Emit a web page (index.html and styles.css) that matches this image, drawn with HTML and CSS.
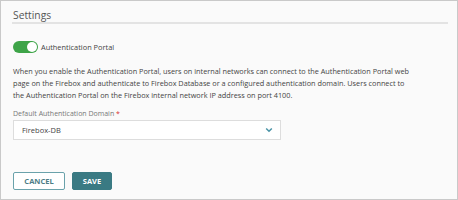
FILE: index.html
```html
<!DOCTYPE html>
<html>
<head>
<meta charset="utf-8">
<link rel="stylesheet" href="styles.css">
</head>
<body>
<div class="panel">
  <h2 class="title">Settings</h2>
  <div class="toggle-row">
    <span class="toggle"><span class="knob"></span></span>
    <span class="toggle-label">Authentication Portal</span>
  </div>
  <p class="desc">When you enable the Authentication Portal, users on internal networks can connect to the Authentication Portal web page on the Firebox and authenticate to Firebox Database or a configured authentication domain. Users connect to the Authentication Portal on the Firebox internal network IP address on port 4100.</p>
  <div class="field">
    <label class="field-label">Default Authentication Domain <span class="req">*</span></label>
    <div class="select">
      <span class="select-value">Firebox-DB</span>
      <svg class="chev" width="8" height="6" viewBox="0 0 8 6"><path d="M1.2 1.5 L4 4.3 L6.8 1.5" fill="none" stroke="#4a93a6" stroke-width="1.5"/></svg>
    </div>
  </div>
  <div class="actions">
    <button class="btn btn-cancel">CANCEL</button>
    <button class="btn btn-save">SAVE</button>
  </div>
</div>
</body>
</html>
```
FILE: styles.css
```css
html, body {
  margin: 0;
  padding: 0;
}
body {
  width: 458px;
  height: 200px;
  font-family: "Open Sans", "Liberation Sans", sans-serif;
  color: #444;
}
.panel {
  box-sizing: border-box;
  width: 458px;
  height: 200px;
  border: 1px solid #c9c9c9;
  background: #fafafa;
  padding: 7px 9px 0 11px;
  display: flex;
  flex-direction: column;
}
.title {
  margin: 0;
  font-size: 10.3px;
  font-weight: 400;
  color: #555;
  line-height: 14px;
  height: 14px;
  padding-left: 1px;
  border-bottom: 2px solid #e3e3e3;
}
.toggle-row {
  display: flex;
  align-items: center;
  gap: 3px;
  margin-top: 17px;
  height: 12px;
  padding-left: 1px;
}
.toggle {
  width: 25px;
  height: 12px;
  border-radius: 6px;
  background: #3ea448;
  display: flex;
  justify-content: flex-end;
  align-items: center;
  padding: 0 1px;
  box-sizing: border-box;
}
.knob {
  width: 10px;
  height: 10px;
  border-radius: 50%;
  background: #fff;
}
.toggle-label {
  font-size: 7.4px;
  color: #444;
}
.desc {
  margin: 12px 0 0 0;
  padding-left: 1px;
  width: 401px;
  font-size: 7.3px;
  line-height: 12px;
  color: #444;
}
.field {
  margin-top: 8px;
  display: flex;
  flex-direction: column;
  padding-left: 1px;
}
.field-label {
  font-size: 7px;
  color: #777;
  line-height: 10px;
}
.req {
  color: #d9302c;
}
.select {
  margin-top: 1px;
  box-sizing: border-box;
  width: 268px;
  height: 20px;
  border: 1px solid #ddd;
  background: #fff;
  display: flex;
  align-items: center;
  justify-content: space-between;
  padding: 0 7px 0 8px;
}
.select-value {
  font-size: 7.5px;
  color: #444;
}
.actions {
  display: flex;
  gap: 7px;
  margin-top: 32px;
  padding-left: 1px;
}
.btn {
  box-sizing: border-box;
  height: 18px;
  font-family: "Open Sans", "Liberation Sans", sans-serif;
  font-size: 7.5px;
  font-weight: 700;
  padding: 0;
  border-radius: 2px;
}
.btn-cancel {
  width: 52px;
  background: #fff;
  border: 1px solid #6aa2ab;
  color: #4d7d85;
}
.btn-save {
  width: 40px;
  background: #3a7a83;
  border: 1px solid #3a7a83;
  color: #fff;
}
```
